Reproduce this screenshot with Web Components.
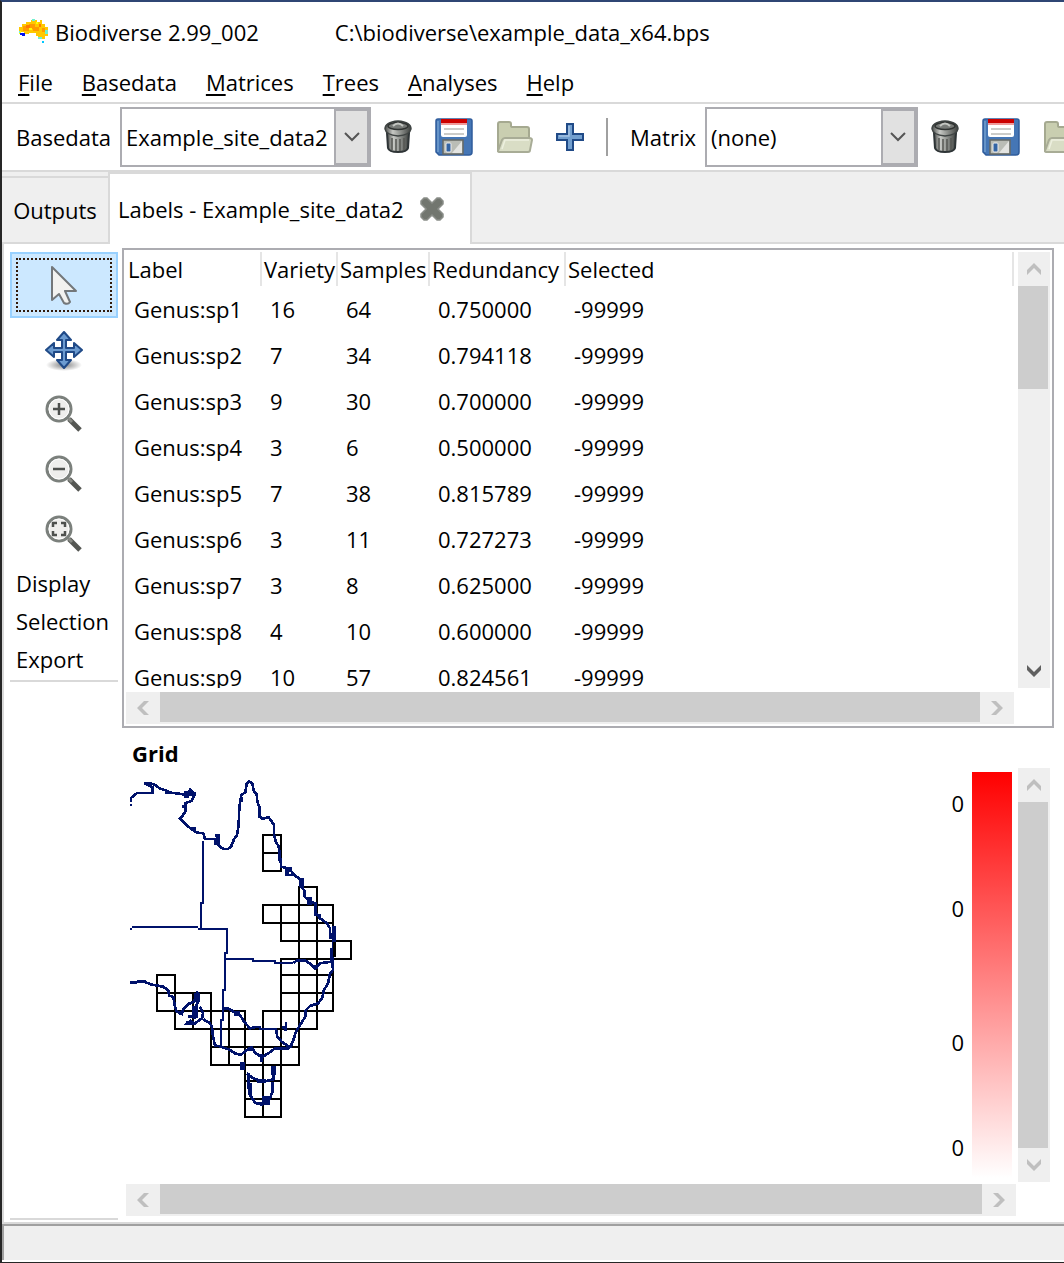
<!DOCTYPE html>
<html lang="en">
<head>
<meta charset="utf-8">
<title>Biodiverse 2.99_002</title>
<style>
    html, body {
        margin: 0;
        height: 100%;
    }

    body {
        --line: #d9d9d9;
        --frame: #acacb1;
        --face: #efefef;
        font: 22px/30px "Open Sans", "Noto Sans", sans-serif;
        color: #000;
        background: #262626;
    }
</style>
</head>
<body>
<bd-window>
    <bd-titlebar slot="title" name="Biodiverse 2.99_002" file="C:\biodiverse\example_data_x64.bps"></bd-titlebar>
    <bd-menubar slot="menu" items="File,Basedata,Matrices,Trees,Analyses,Help"></bd-menubar>
    <bd-toolbar slot="toolbar">
        <bd-combo label="Basedata" value="Example_site_data2" style="--combo-width: 251px"></bd-combo>
        <bd-file-tools kind="basedata"></bd-file-tools>
        <bd-tool icon="add" label="Add basedata"></bd-tool>
        <bd-separator></bd-separator>
        <bd-combo label="Matrix" value="(none)" style="--combo-width: 213px"></bd-combo>
        <bd-file-tools kind="matrix"></bd-file-tools>
    </bd-toolbar>
    <bd-tabs slot="tabs" idle="Outputs" active="Labels - Example_site_data2"></bd-tabs>
    <bd-palette slot="side"></bd-palette>
    <bd-label-list slot="list"></bd-label-list>
    <bd-grid-view slot="grid" heading="Grid"></bd-grid-view>
</bd-window>

<script>
const zoomIcon = (mark) => `
    <svg width="38" height="38" viewBox="0 0 38 38">
        <path d="M24 24L35 35" stroke="#555753" stroke-width="5"/>
        <path d="M23 23L27 27" stroke="#888a85" stroke-width="3"/>
        <circle cx="14" cy="14" r="12" fill="#eeeeec" stroke="#7b807c" stroke-width="3"/>
        <circle cx="14" cy="14" r="10" fill="none" stroke="#fff" stroke-width="1"/>
        <path d="${mark}" fill="none" stroke="#4d504d" stroke-width="2.5"/>
    </svg>`;

const ICONS = {
    trash: `
        <svg width="28" height="34" viewBox="0 0 28 34">
            <defs><linearGradient id="can"><stop offset="0" stop-color="#4b4d4b"/><stop offset=".3" stop-color="#c6c8c4"/><stop offset=".6" stop-color="#8d908c"/><stop offset="1" stop-color="#3f4240"/></linearGradient></defs>
            <path d="M3 13L4 28Q5 32 14 32Q23 32 24 28L25 13Z" fill="url(#can)" stroke="#2e3436" stroke-width="2"/>
            <path d="M8 18V30M12 19V31M16 19V31M20 18V30" stroke="#555753" stroke-width="1.5"/>
            <path d="M1 9Q1 2 14 1Q27 2 27 9Q26 15 14 16Q2 15 1 9Z" fill="url(#can)" stroke="#3f4443" stroke-width="1.5"/>
            <ellipse cx="14" cy="6" rx="10" ry="3.6" fill="#777a77" stroke="#303332" stroke-width="1.5"/>
            <path d="M9 6Q14 1 19 6" fill="none" stroke="#c4c6c2" stroke-width="2"/>
        </svg>`,
    save: `
        <svg width="38" height="38" viewBox="0 0 38 38">
            <path d="M3 1H35Q37 1 37 3V34Q37 37 34 37H4L1 34V3Q1 1 3 1Z" fill="#4576b5" stroke="#2f5c9c" stroke-width="1.5"/>
            <path d="M3 3V34" stroke="#729fcf" stroke-width="1.5"/>
            <path d="M6 1H32V17Q32 19 30 19H8Q6 19 6 17Z" fill="#fff"/>
            <path d="M6 1H32V5H6Z" fill="#c00"/>
            <path d="M6 5H32V7H6Z" fill="#ef9a9a"/>
            <path d="M9 11H29M9 16H29" stroke="#bcbcb8" stroke-width="1.5"/>
            <path d="M8 22H28V36H8Z" fill="#babdb6" stroke="#666966" stroke-width="1.5"/>
            <path d="M17 35L27 23V35Z" fill="#e3e4e1"/>
            <rect x="11" y="25" width="5" height="9" rx="1" fill="#3465a4" stroke="#eee"/>
        </svg>`,
    folder: `
        <svg width="37" height="34" viewBox="0 0 37 34">
            <path d="M2 31V4Q2 2 4 2H13Q15 2 15 4V6Q15 7 17 7H31Q33 7 33 9V20L30 31Z" fill="#c9ceb0" stroke="#a5a990" stroke-width="2"/>
            <path d="M2 31L6 20Q7 18 9 18H33Q36 18 36 20L34 30Q34 32 32 32H4Q2 32 2 31Z" fill="#d9ddc5" stroke="#a8ac96" stroke-width="2"/>
            <path d="M6 29L9 20H33" fill="none" stroke="#edf0df" stroke-width="1.5"/>
        </svg>`,
    add: `
        <svg width="28" height="28" viewBox="0 0 28 28">
            <path d="M11 1H17V11H27V17H17V27H11V17H1V11H11Z" fill="#729fcf" stroke="#204a87" stroke-width="2"/>
            <path d="M13 3V13H3" fill="none" stroke="#a4c2e4" stroke-width="1.5"/>
        </svg>`,
    pointer: `
        <svg width="28" height="40" viewBox="0 0 28 40">
            <path d="M2 2V35L9 29L14 38Q18 40 20 37L15 26H26Z" fill="#f2f2f0" stroke="#73777a" stroke-width="2" stroke-linejoin="round"/>
        </svg>`,
    pan: `
        <svg width="38" height="40" viewBox="0 0 38 40">
            <defs><radialGradient id="shade"><stop offset="0" stop-color="#000" stop-opacity=".5"/><stop offset="1" stop-color="#000" stop-opacity="0"/></radialGradient></defs>
            <ellipse cx="19" cy="34" rx="18" ry="6" fill="url(#shade)"/>
            <path d="M19 1L26 9H21V17H29V12L37 19L29 26V21H21V29H26L19 37L12 29H17V21H9V26L1 19L9 12V17H17V9H12Z" fill="#6c9bd0" stroke="#204a87" stroke-width="2" stroke-linejoin="round"/>
        </svg>`,
    zoomin: zoomIcon('M8 14H20M14 8V20'),
    zoomout: zoomIcon('M8 14H20'),
    zoomfit: zoomIcon('M8 12V8H12M16 8H20V12M20 16V20H16M12 20H8V16'),
    close: `
        <svg width="24" height="24" viewBox="0 0 24 24">
            <path d="M7 1L12 6L17 1H20L23 4V7L18 12L23 17V20L20 23H17L12 18L7 23H4L1 20V17L6 12L1 7V4L4 1Z" fill="#72766f" stroke="#8b8e89" stroke-width="1.5"/>
        </svg>`
};

// Set up the shadow root and fill it in one go
class BdElement extends HTMLElement {
    constructor() {
        super();
        this.attachShadow({ mode: 'open' });
    }

    connectedCallback() {
        this.shadowRoot.innerHTML = `
            <style>
                :host, * { box-sizing: border-box; }
                button, select {
                    margin: 0;
                    padding: 0;
                    border: 0;
                    border-radius: 0;
                    background: none;
                    color: inherit;
                    font: inherit;
                }
                svg { display: block; flex: none; }
                ${this.styles()}
            </style>
            ${this.markup()}
        `;
    }

    styles() {
        return '';
    }

    markup() {
        return '<slot></slot>';
    }
}

class BdWindow extends BdElement {
    styles() {
        return `
            :host {
                display: flex;
                flex-direction: column;
                height: 100vh;
                overflow: hidden;
                border-top: 2px solid #2f4674;
                border-left: 2px solid #262626;
                border-bottom: 1px solid #262626;
                background: #fff;
            }
            .page {
                flex: 1;
                display: flex;
                min-height: 0;
                padding-right: 10px;
                border-left: 2px solid var(--line);
                border-bottom: 2px solid var(--line);
            }
            .panes {
                flex: 1;
                min-width: 0;
                display: flex;
                flex-direction: column;
                padding-top: 4px;
            }
            ::slotted([slot="grid"]) { flex: 1; }
            .status {
                height: 36px;
                flex: none;
                margin-bottom: 2px;
                border-top: 2px solid #a0a0a0;
                border-left: 2px solid #a0a0a0;
                background: var(--face);
            }
        `;
    }

    markup() {
        return `
            <slot name="title"></slot>
            <slot name="menu"></slot>
            <slot name="toolbar"></slot>
            <slot name="tabs"></slot>
            <main class="page">
                <slot name="side"></slot>
                <div class="panes">
                    <slot name="list"></slot>
                    <slot name="grid"></slot>
                </div>
            </main>
            <footer class="status"></footer>
        `;
    }
}

class BdTitlebar extends BdElement {
    styles() {
        return `
            :host {
                display: flex;
                align-items: center;
                flex: none;
                height: 60px;
                padding-left: 16px;
            }
            svg { margin-right: 6px; }
            .file { margin-left: 76px; }
        `;
    }

    markup() {
        return `
            <svg width="31" height="26" viewBox="0 0 31 26" shape-rendering="crispEdges">
                <path d="M1 8H4V5H8V3H13V1H19V3H22V1H24V5H27V8H30V17H27V20H20V17H18V14H11V15H6V13H1Z" fill="#ffc800"/>
                <path d="M5 7H11V5H17V8H21V12H15V10H11V12H5ZM24 9H27V13H24Z" fill="#ff9a00"/>
                <path d="M8 6H12V9H8ZM21 5H23V8H21Z" fill="#ff7a00"/>
                <path d="M1 12H3V15H1ZM11 9H14V11H11ZM18 3H20V5H18Z" fill="#ffff00"/>
                <path d="M2 14H7V17H4V16H2Z" fill="#0010f0"/>
                <path d="M1 12H2V14H1ZM14 0H17V2H14ZM27 11H30V15H27ZM20 18H24V20H20Z" fill="#6ff0d0"/>
                <path d="M24 22H26V24H24Z" fill="#00c8ff"/>
            </svg>
            <span>${this.getAttribute('name')}</span>
            <span class="file">${this.getAttribute('file')}</span>
        `;
    }
}

class BdMenubar extends BdElement {
    styles() {
        return `
            :host {
                display: flex;
                gap: 29px;
                flex: none;
                height: 42px;
                padding-left: 16px;
                border-bottom: 2px solid var(--line);
            }
            span {
                text-decoration: underline;
                text-decoration-thickness: 2px;
                text-underline-offset: 3px;
            }
        `;
    }

    markup() {
        return this.getAttribute('items').split(',')
            .map((item) => `<button type="button"><span>${item[0]}</span>${item.slice(1)}</button>`)
            .join('');
    }
}

class BdToolbar extends BdElement {
    styles() {
        return `
            :host {
                display: flex;
                align-items: center;
                flex: none;
                height: 68px;
                padding-left: 14px;
                overflow: hidden;
                border-bottom: 2px solid var(--line);
            }
            ::slotted(*) { flex: none; }
        `;
    }
}

class BdCombo extends BdElement {
    styles() {
        return `
            :host {
                display: flex;
                align-items: center;
                gap: 9px;
            }
            .box {
                display: grid;
                grid-template-columns: 1fr 35px;
                width: var(--combo-width);
                height: 60px;
                border: 2px solid var(--frame);
            }
            select {
                grid-area: 1 / 1 / 2 / 3;
                appearance: none;
                padding-left: 4px;
                background: #fff;
            }
            .arrow {
                grid-area: 1 / 2;
                display: grid;
                place-items: center;
                border: 2px solid var(--frame);
                background: #e1e1e1;
                pointer-events: none;
            }
        `;
    }

    markup() {
        return `
            <label for="choice">${this.getAttribute('label')}</label>
            <div class="box">
                <select id="choice"><option>${this.getAttribute('value')}</option></select>
                <span class="arrow">
                    <svg width="16" height="10" viewBox="0 0 16 10"><path d="M1 1L8 8L15 1" fill="none" stroke="#555" stroke-width="2"/></svg>
                </span>
            </div>
        `;
    }
}

class BdTool extends BdElement {
    styles() {
        return `
            :host { display: flex; }
            button { display: flex; }
        `;
    }

    markup() {
        return `<button type="button" aria-label="${this.getAttribute('label')}">${ICONS[this.getAttribute('icon')]}</button>`;
    }
}

class BdFileTools extends BdElement {
    styles() {
        return `
            :host {
                display: flex;
                align-items: center;
                gap: 23px;
                padding: 0 23px 0 13px;
            }
        `;
    }

    markup() {
        const kind = this.getAttribute('kind');
        return `
            <bd-tool icon="trash" label="Delete ${kind}"></bd-tool>
            <bd-tool icon="save" label="Save ${kind}"></bd-tool>
            <bd-tool icon="folder" label="Open ${kind}"></bd-tool>
        `;
    }
}

class BdSeparator extends BdElement {
    styles() {
        return `
            :host {
                width: 2px;
                height: 38px;
                margin: 0 22px;
                background: #a0a0a0;
            }
        `;
    }
}

class BdTabs extends BdElement {
    styles() {
        return `
            :host {
                display: flex;
                flex: none;
                height: 72px;
                background: var(--face);
            }
            button { white-space: nowrap; }
            .idle {
                width: 106px;
                margin-top: 4px;
                border-top: 2px solid var(--line);
                border-bottom: 2px solid var(--line);
            }
            .active {
                display: flex;
                align-items: center;
                justify-content: space-between;
                width: 364px;
                padding: 0 26px 0 8px;
                border: 2px solid var(--line);
                border-bottom: 0;
                background: #fff;
            }
            .rest {
                flex: 1;
                border-bottom: 2px solid var(--line);
            }
        `;
    }

    markup() {
        return `
            <button type="button" class="idle">${this.getAttribute('idle')}</button>
            <div class="active">
                <button type="button">${this.getAttribute('active')}</button>
                <button type="button" aria-label="Close tab">${ICONS.close}</button>
            </div>
            <div class="rest"></div>
        `;
    }
}

class BdPalette extends BdElement {
    styles() {
        return `
            :host {
                display: flex;
                flex-direction: column;
                flex: none;
                width: 118px;
                padding: 8px 4px 2px 6px;
            }
            button {
                display: grid;
                place-items: center;
                height: 60px;
            }
            .selected {
                height: 66px;
                padding: 4px;
                border: 2px solid #99d1ff;
                background: #cce8ff;
            }
            .selected span {
                display: grid;
                place-items: center;
                width: 100%;
                height: 100%;
                border: 2px dotted #321a0a;
            }
            .pan { height: 66px; }
            .menu {
                height: 38px;
                justify-items: start;
                padding-left: 6px;
            }
            hr {
                width: 100%;
                margin: 2px 0 0;
                border: 0;
                border-top: 2px solid var(--line);
            }
            .last { margin-top: auto; }
        `;
    }

    markup() {
        return `
            <button type="button" class="selected" aria-label="Select"><span>${ICONS.pointer}</span></button>
            <button type="button" class="pan" aria-label="Pan">${ICONS.pan}</button>
            <button type="button" aria-label="Zoom in">${ICONS.zoomin}</button>
            <button type="button" aria-label="Zoom out">${ICONS.zoomout}</button>
            <button type="button" aria-label="Zoom to fit">${ICONS.zoomfit}</button>
            <button type="button" class="menu">Display</button>
            <button type="button" class="menu">Selection</button>
            <button type="button" class="menu">Export</button>
            <hr>
            <hr class="last">
        `;
    }
}

class BdScrollbar extends BdElement {
    styles() {
        return `
            :host {
                display: grid;
                background: var(--face);
                color: #bfbfbf;
            }
            :host([axis="x"]) {
                grid-template-columns: 34px 1fr 34px;
                height: 32px;
            }
            :host([axis="y"]) {
                grid-template-rows: 34px 1fr 34px;
                width: 32px;
            }
            button { display: grid; place-items: center; }
            .thumb { background: #cdcdcd; }
            :host([axis="x"]) .thumb { height: 30px; }
            :host([axis="y"]) .thumb { width: 30px; height: var(--thumb, 100%); }
            :host([more]) button:last-child { color: #606060; }
        `;
    }

    markup() {
        const vertical = this.getAttribute('axis') === 'y';
        const size = vertical ? 'width="14" height="12" viewBox="0 0 14 12"' : 'width="12" height="14" viewBox="0 0 12 14"';
        const back = vertical ? 'M0 12V7L7 0L14 7V12L7 5Z' : 'M12 0H7L0 7L7 14H12L5 7Z';
        const next = vertical ? 'M0 0V5L7 12L14 5V0L7 7Z' : 'M0 0H5L12 7L5 14H0L7 7Z';
        return `
            <button type="button" aria-label="Scroll back"><svg ${size} fill="currentColor"><path d="${back}"/></svg></button>
            <div class="thumb"></div>
            <button type="button" aria-label="Scroll on"><svg ${size} fill="currentColor"><path d="${next}"/></svg></button>
        `;
    }
}

class BdLabelList extends BdElement {
    styles() {
        return `
            :host {
                display: grid;
                grid-template-columns: 1fr 32px;
                grid-template-rows: 436px 32px;
                gap: 4px;
                flex: none;
                padding: 2px;
                border: 2px solid var(--frame);
            }
            .view { overflow: hidden; }
            table {
                width: 100%;
                table-layout: fixed;
                border-collapse: separate;
                border-spacing: 0;
            }
            th, td {
                padding: 0;
                text-align: left;
                white-space: nowrap;
            }
            th {
                height: 34px;
                padding-left: 2px;
                border-right: 2px solid #e5e5e5;
                font-weight: normal;
            }
            td {
                height: 46px;
                padding-left: 8px;
            }
        `;
    }

    markup() {
        const rows = [
            ['Genus:sp1', '16', '64', '0.750000', '-99999'],
            ['Genus:sp2', '7', '34', '0.794118', '-99999'],
            ['Genus:sp3', '9', '30', '0.700000', '-99999'],
            ['Genus:sp4', '3', '6', '0.500000', '-99999'],
            ['Genus:sp5', '7', '38', '0.815789', '-99999'],
            ['Genus:sp6', '3', '11', '0.727273', '-99999'],
            ['Genus:sp7', '3', '8', '0.625000', '-99999'],
            ['Genus:sp8', '4', '10', '0.600000', '-99999'],
            ['Genus:sp9', '10', '57', '0.824561', '-99999']
        ];
        return `
            <div class="view">
                <table>
                    <colgroup><col width="136"><col width="76"><col width="92"><col width="136"><col></colgroup>
                    <thead><tr><th>Label</th><th>Variety</th><th>Samples</th><th>Redundancy</th><th>Selected</th></tr></thead>
                    <tbody>${rows.map((row) => `<tr>${row.map((cell) => `<td>${cell}</td>`).join('')}</tr>`).join('')}</tbody>
                </table>
            </div>
            <bd-scrollbar axis="y" more style="--thumb: 28%"></bd-scrollbar>
            <bd-scrollbar axis="x"></bd-scrollbar>
        `;
    }
}

// Column and row edges of the cells, in map units (three to a pixel)
const COLS = [111, 165, 219, 273, 327, 375, 429, 483, 537, 591, 639, 693];
const ROWS = [195, 249, 303, 351, 405, 459, 513, 567, 615, 669, 723, 777, 831, 885, 933, 987, 1041];
const CELLS = [
    [6], [6], [], [8], [6, 7, 8, 9], [7, 8, 9], [8, 9, 10], [7, 8, 9],
    [0, 7, 8, 9], [0, 1, 2, 7, 8, 9], [1, 2, 3, 4, 6, 7, 8],
    [3, 4, 5, 6, 7], [3, 4, 5, 6, 7], [5, 6], [5, 6], [5, 6]
];

class BdMap extends BdElement {
    styles() {
        return ':host { display: block; }';
    }

    markup() {
        const cells = CELLS.map((row, r) => row.map((c) =>
            `<rect x="${COLS[c]}" y="${ROWS[r]}" width="${COLS[c + 1] - COLS[c]}" height="${ROWS[r + 1] - ROWS[r]}"/>`
        ).join('')).join('');
        return `
            <svg width="234" height="354" viewBox="18 -6 702 1062" fill="none" stroke-width="6" shape-rendering="crispEdges" role="img" aria-label="Cells over the coastline">
                <g stroke="#000">${cells}</g>
                <g stroke="#00126b">
                    <path stroke-width="8" d="M33 102V108M33 96V84L42 76L52 69H98V52L80 43L90 39L105 45L120 56L138 61L150 68L170 70L190 73L205 66L212 60L224 72L216 92L196 100V124L190 134L180 146L198 164L215 178L232 188L250 190L255 207H288L297 228L310 237H324L334 228L342 208L351 195L356 165L358 110L364 76L376 66L380 42L388 34L397 40L402 66L410 72L412 95L418 110V140L428 146L446 142L456 156L462 164V194L468 218L476 228L480 262L484 290L500 294L514 304L525 318L546 330L543 350L554 362V380L570 395L588 400V430L600 445L620 459L630 475V492L640 510V530L634 548L637 575L639 600L630 610L624 640L612 660L606 685L594 700L570 708L556 722V740L540 765L528 785L520 810L512 830L505 835H465L445 850L425 862L405 848L395 832L378 842L362 855L345 850L330 840L303 830L285 826L279 800L276 770L268 758L250 748"/>
                    <path stroke-width="8" d="M30 638H48L54 634H74L80 638L96 644L130 650L145 662L147 676L160 682L165 710L170 724L185 732L190 718L205 702L222 695L232 665V700L224 720V742L205 740M240 710L249 730L246 745L222 762H200L215 750"/>
                    <path d="M249 212V398H243V474M36 471H234M30 477H36M234 477H321V549H315V660H309V750H303V830M315 567H400V573H465V579H520"/>
                    <path stroke-width="8" d="M520 579L530 572H555L570 580L585 596L600 580L634 575M309 715H325L345 728L360 735L372 755L390 775L405 771H420V777H468L472 800L485 815L510 832M380 910L400 925L430 935L460 928V888M385 910V950L390 975L405 998L425 1004L445 995L458 965V935"/>
                </g>
                <g fill="#00126b">
                    <path d="M72 36H97V48H78V42H72ZM192 63H208V54H214V66H227V78H208V84H192ZM208 172H227V184H214ZM285 192H300V226H282V210H288ZM361 82H370V95H361ZM186 106H200V115H186ZM135 62H148V72H135Z"/>
                    <path d="M474 224H480V274H474ZM496 292H516V304H508V312H522V318H496ZM538 324H552V350H538ZM560 382H576V405H560ZM582 396H592V438H582ZM594 432H604V446H594ZM636 468H648V520H636ZM627 488H636V508H627ZM630 535H642V575H630Z"/>
                    <path d="M222 668H240V696H222ZM216 708H233V744H204V734H216ZM198 754H222V766H198ZM178 724H190V736H178ZM486 768H496V756H502V784H492V776H486ZM342 724H360V738H342ZM578 585H594V598H578ZM384 830H400V844H384ZM420 852H430V876H420ZM360 876H376V900H360ZM452 888H468V916H452ZM384 940H396V976H384ZM412 928H438V940H412ZM426 978H450V1006H408V996H426Z"/>
                </g>
                <path d="M639 516H648V562H639Z" fill="#000"/>
            </svg>
        `;
    }
}

class BdLegend extends BdElement {
    styles() {
        return `
            :host {
                display: flex;
                gap: 8px;
                padding: 4px 4px 4px 0;
            }
            ol {
                display: flex;
                flex-direction: column;
                justify-content: space-between;
                margin: 0;
                padding: 16px 0;
                list-style: none;
            }
            li:nth-child(2) { margin-bottom: 28px; }
            .ramp {
                width: 40px;
                background: linear-gradient(#f00, #fff);
            }
        `;
    }

    markup() {
        return `
            <ol><li>0</li><li>0</li><li>0</li><li>0</li></ol>
            <div class="ramp"></div>
        `;
    }
}

class BdGridView extends BdElement {
    styles() {
        return `
            :host {
                display: flex;
                flex-direction: column;
                min-height: 0;
                padding: 10px 4px 6px;
            }
            h2 {
                margin: 0 6px;
                font-size: 22px;
                line-height: 30px;
            }
            .area {
                flex: 1;
                display: grid;
                grid-template-columns: 1fr auto 32px;
                grid-template-rows: 1fr 32px;
                gap: 2px;
            }
            [axis="x"] { grid-column: 1 / 3; }
        `;
    }

    markup() {
        return `
            <h2>${this.getAttribute('heading')}</h2>
            <div class="area">
                <bd-map></bd-map>
                <bd-legend></bd-legend>
                <bd-scrollbar axis="y"></bd-scrollbar>
                <bd-scrollbar axis="x"></bd-scrollbar>
            </div>
        `;
    }
}

customElements.define('bd-window', BdWindow);
customElements.define('bd-titlebar', BdTitlebar);
customElements.define('bd-menubar', BdMenubar);
customElements.define('bd-toolbar', BdToolbar);
customElements.define('bd-combo', BdCombo);
customElements.define('bd-tool', BdTool);
customElements.define('bd-file-tools', BdFileTools);
customElements.define('bd-separator', BdSeparator);
customElements.define('bd-tabs', BdTabs);
customElements.define('bd-palette', BdPalette);
customElements.define('bd-scrollbar', BdScrollbar);
customElements.define('bd-label-list', BdLabelList);
customElements.define('bd-map', BdMap);
customElements.define('bd-legend', BdLegend);
customElements.define('bd-grid-view', BdGridView);
</script>
</body>
</html>
